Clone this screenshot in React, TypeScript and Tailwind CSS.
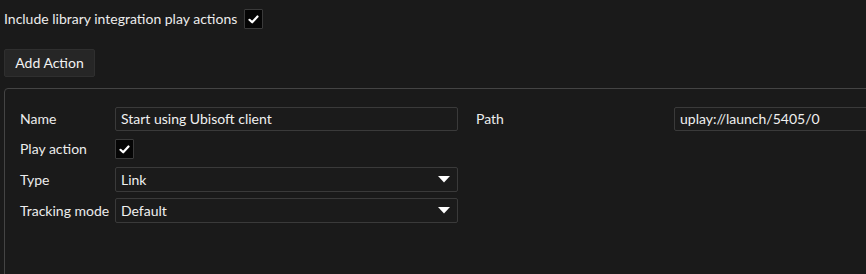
import React from "react";

function Check() {
  return (
    <div className="w-[19px] h-[20px] bg-[#050505] border border-[#3a3a3a] rounded-[1px] flex items-center justify-center">
      <svg width="11" height="9" viewBox="0 0 11 9">
        <polyline points="1.5,4.8 4.2,7.3 9.5,1.5" fill="none" stroke="#ffffff" strokeWidth="2.2" strokeLinecap="round" strokeLinejoin="round" />
      </svg>
    </div>
  );
}

function Input({ value }: { value: string }) {
  return (
    <div className="h-[24px] border border-[#3a3a3a] rounded-[2px] bg-[#1b1b1b] flex items-center pl-[5px] text-[#f0f0f0]">
      {value}
    </div>
  );
}

function Select({ value }: { value: string }) {
  return (
    <div className="h-[25px] border border-[#3a3a3a] rounded-[2px] bg-[#1b1b1b] flex items-center justify-between pl-[5px] pr-[7px] text-[#f0f0f0]">
      <span>{value}</span>
      <svg width="12" height="7" viewBox="0 0 12 7">
        <polygon points="0,0 12,0 6,6.5" fill="#ffffff" />
      </svg>
    </div>
  );
}

export default function App() {
  return (
    <div
      className="w-[866px] h-[274px] overflow-hidden bg-[#1a1a1a] text-[#ececec] text-[14px] leading-[18px]"
      style={{ fontFamily: "Lato, 'Noto Sans', sans-serif" }}
    >
      <div className="flex items-center pt-[9px] pl-[4px] gap-[7px]">
        <span>Include library integration play actions</span>
        <Check />
      </div>
      <div className="pl-[4px] mt-[20px]">
        <div className="w-[91px] h-[28px] bg-[#262626] border border-[#2f2f2f] rounded-[2px] flex items-center justify-center text-[#f2f2f2]">
          Add Action
        </div>
      </div>
      <div className="ml-[4px] mt-[11px] w-[900px] h-[200px] border border-[#444444] rounded-tl-[4px] pt-[18px] pl-[15px]">
        <div className="grid grid-cols-[95px_343px_216px_200px] gap-y-[6px] items-center">
          <span>Name</span>
          <Input value="Start using Ubisoft client" />
          <span className="pl-[18px]">Path</span>
          <Input value="uplay://launch/5405/0" />

          <span>Play action</span>
          <div className="h-[24px] flex items-center">
            <Check />
          </div>
          <span />
          <span />

          <span>Type</span>
          <Select value="Link" />
          <span />
          <span />

          <span>Tracking mode</span>
          <Select value="Default" />
          <span />
          <span />
        </div>
      </div>
    </div>
  );
}
